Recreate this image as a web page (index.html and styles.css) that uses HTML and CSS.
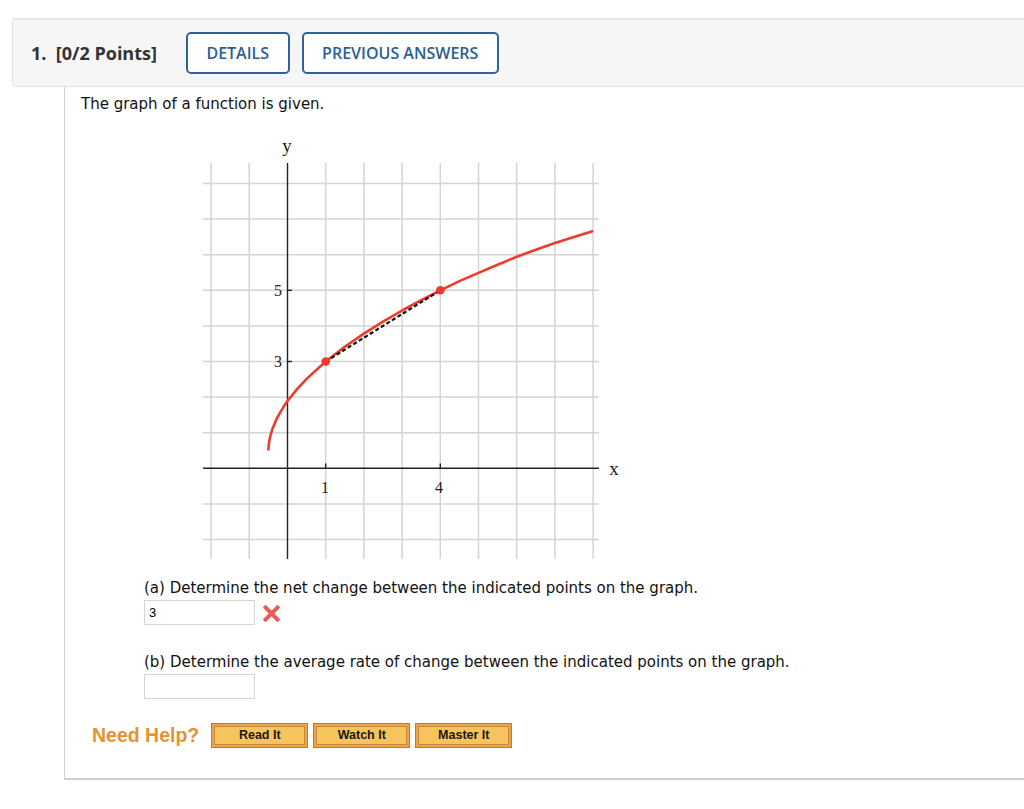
FILE: index.html
```html
<!DOCTYPE html>
<html>
<head>
<meta charset="utf-8">
<link rel="stylesheet" href="styles.css">
</head>
<body>
<div class="page">
  <div class="qhead">
    <span class="qnum">1.&nbsp; [0/2 Points]</span>
    <button class="hbtn">DETAILS</button>
    <button class="hbtn">PREVIOUS ANSWERS</button>
  </div>
  <div class="qbody">
    <p class="intro">The graph of a function is given.</p>
    <svg class="graph" width="560" height="445" viewBox="81 125 560 445" xmlns="http://www.w3.org/2000/svg">
      <g stroke="#d4d4d4" stroke-width="1.5" fill="none">
        <line x1="211" y1="163" x2="211" y2="559"/>
        <line x1="249.2" y1="163" x2="249.2" y2="559"/>
        <line x1="325.7" y1="163" x2="325.7" y2="559"/>
        <line x1="363.9" y1="163" x2="363.9" y2="559"/>
        <line x1="402.1" y1="163" x2="402.1" y2="559"/>
        <line x1="440.3" y1="163" x2="440.3" y2="559"/>
        <line x1="478.5" y1="163" x2="478.5" y2="559"/>
        <line x1="516.7" y1="163" x2="516.7" y2="559"/>
        <line x1="554.9" y1="163" x2="554.9" y2="559"/>
        <line x1="593.1" y1="163" x2="593.1" y2="559"/>
        <line x1="203" y1="183.5" x2="599" y2="183.5"/>
        <line x1="203" y1="219.1" x2="599" y2="219.1"/>
        <line x1="203" y1="254.7" x2="599" y2="254.7"/>
        <line x1="203" y1="290.3" x2="599" y2="290.3"/>
        <line x1="203" y1="325.9" x2="599" y2="325.9"/>
        <line x1="203" y1="361.5" x2="599" y2="361.5"/>
        <line x1="203" y1="397.1" x2="599" y2="397.1"/>
        <line x1="203" y1="432.7" x2="599" y2="432.7"/>
        <line x1="203" y1="503.9" x2="599" y2="503.9"/>
        <line x1="203" y1="539.5" x2="599" y2="539.5"/>
      </g>
      <g stroke="#222" stroke-width="1.4">
        <line x1="287.5" y1="163" x2="287.5" y2="559"/>
        <line x1="203" y1="468.3" x2="599" y2="468.3"/>
        <line x1="287.5" y1="290.3" x2="292" y2="290.3"/>
        <line x1="287.5" y1="361.5" x2="292" y2="361.5"/>
        <line x1="325.7" y1="468.3" x2="325.7" y2="463.5"/>
        <line x1="440.3" y1="468.3" x2="440.3" y2="463.5"/>
      </g>
      <g class="lbl">
        <text class="ax" x="287" y="152" text-anchor="middle">y</text>
        <text class="ax" x="614" y="475" text-anchor="middle">x</text>
        <text x="278" y="296" text-anchor="middle">5</text>
        <text x="278" y="367" text-anchor="middle">3</text>
        <text x="325" y="493" text-anchor="middle">1</text>
        <text x="439" y="493" text-anchor="middle">4</text>
      </g>
      <polyline fill="none" stroke="#ee3b2b" stroke-width="2.6" stroke-linejoin="round" stroke-linecap="butt"
        points="268.4,450.5 268.8,444.4 269.2,441.7 270.3,436.1 272.2,429.6 276.0,420.2 279.9,412.9 283.7,406.6 287.5,401.0 297.05,389.1 306.6,378.9 325.7,361.5 344.8,346.7 363.9,333.6 383.0,321.6 402.1,310.5 421.2,300.1 440.3,290.3 459.4,281.1 478.5,272.9 497.6,264.7 516.7,256.8 535.8,249.7 554.9,243.0 574.0,236.9 593.1,230.9"/>
      <line x1="325.7" y1="361.5" x2="440.3" y2="290.3" stroke="#111" stroke-width="2.2" stroke-dasharray="4 2.5"/>
      <circle cx="325.7" cy="361.5" r="4.3" fill="#ee3b2b"/>
      <circle cx="440.3" cy="290.3" r="4.3" fill="#ee3b2b"/>
    </svg>
    <div class="parts">
      <p class="ptext">(a) Determine the net change between the indicated points on the graph.</p>
      <div class="answer">
        <span class="inbox">3</span>
        <svg class="xmark" width="17" height="17" viewBox="0 0 17 17" xmlns="http://www.w3.org/2000/svg">
          <path d="M2.5 2.5 L14.5 14.5 M14.5 2.5 L2.5 14.5" stroke="#ea5b5b" stroke-width="4" stroke-linecap="square"/>
        </svg>
      </div>
      <p class="ptext pb">(b) Determine the average rate of change between the indicated points on the graph.</p>
      <div class="answer">
        <span class="inbox"></span>
      </div>
    </div>
    <div class="help">
      <span class="needhelp">Need Help?</span>
      <span class="gbtn"><span>Read It</span></span>
      <span class="gbtn"><span>Watch It</span></span>
      <span class="gbtn"><span>Master It</span></span>
    </div>
  </div>
</div>
</body>
</html>
```

FILE: styles.css
```css
* { box-sizing: border-box; }
html, body { margin: 0; padding: 0; background: #fff; }
.page { padding-top: 18px; }
.qhead {
  margin-left: 12px;
  height: 69px;
  background: #f6f6f6;
  border: 1px solid #e2e2e2;
  border-top: 2px solid #e6e6e6;
  border-right: none;
  border-radius: 3px 0 0 3px;
  display: flex;
  align-items: center;
  padding-left: 18px;
}
.qnum {
  font-family: "Open Sans", sans-serif;
  font-weight: 700;
  font-size: 18px;
  color: #333;
  margin-right: 29px;
}
.hbtn {
  font-family: "Open Sans", sans-serif;
  font-weight: 600;
  font-size: 16px;
  color: #2b5f93;
  background: #fff;
  border: 2px solid #2e6497;
  border-radius: 5px;
  height: 42px;
  padding: 0 18.5px;
  margin-right: 12px;
}
.qbody {
  margin-left: 64px;
  border-left: 1px solid #d0d0d0;
  border-bottom: 2px solid #cfcfcf;
  padding: 7px 0 30px 16px;
  font-family: "DejaVu Sans", Verdana, sans-serif;
  color: #111;
}
.intro { margin: 0; font-size: 15px; line-height: 20px; }
.graph { display: block; margin-top: 11px; }
.parts { margin-left: 63px; margin-top: 9px; }
.ptext { margin: 0; font-size: 15px; line-height: 18px; }
.pb { margin-top: 28px; }
.answer { display: flex; align-items: center; margin-top: 3px; height: 25px; }
.inbox {
  display: inline-block;
  width: 111px;
  height: 25px;
  border: 1px solid #d4d4d4;
  font-family: "Liberation Sans", Arial, sans-serif;
  font-size: 13px;
  line-height: 23px;
  padding-left: 4px;
  color: #000;
}
.xmark { margin-left: 8px; margin-top: 1px; }
.help {
  display: flex;
  align-items: center;
  margin-top: 24px;
  margin-left: 11px;
}
.needhelp {
  font-family: "Liberation Sans", Arial, sans-serif;
  font-weight: 700;
  font-size: 19.5px;
  color: #e8912f;
  margin-right: 12px;
}
.gbtn {
  display: inline-block;
  width: 97px;
  height: 25px;
  margin-right: 5px;
  border: 1px solid #c07a30;
  background: #f2a445;
  padding: 2px;
}
.gbtn span {
  display: block;
  height: 100%;
  border: 1px solid #c5893c;
  background: #f6c35c;
  font-family: "Liberation Sans", Arial, sans-serif;
  font-weight: 700;
  font-size: 12.5px;
  line-height: 17px;
  text-align: center;
  color: #1a1a1a;
}
.lbl text {
  font-family: "Liberation Serif", "DejaVu Serif", serif;
  font-size: 16px;
  fill: #222;
}
.lbl .ax { font-size: 19px; }
```
